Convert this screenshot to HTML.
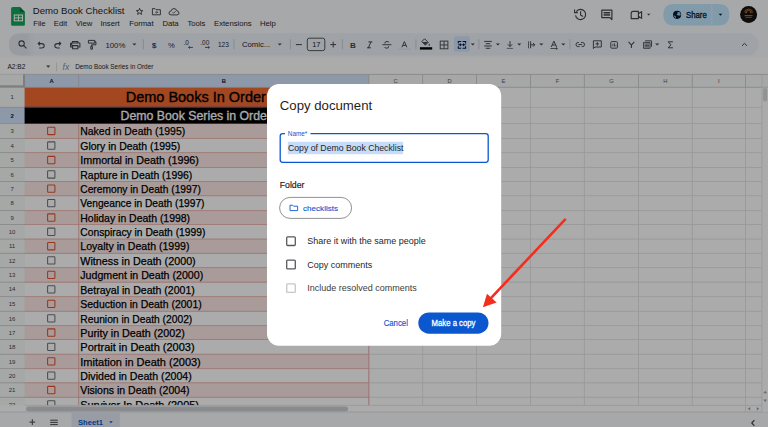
<!DOCTYPE html><html><head><meta charset="utf-8"><style>
html,body{margin:0;padding:0;width:768px;height:427px;overflow:hidden;background:#fff}
svg{position:absolute;left:0;top:0;display:block}
text{font-family:'Liberation Sans', sans-serif}
</style></head><body>
<svg width="768" height="427" viewBox="0 0 768 427">

<rect x="0" y="0" width="768" height="74" fill="#f9fbfd"/><rect x="0" y="58" width="768" height="16" fill="#ffffff"/>
<path d="M12.6 7.1 H19.9 L24.9 12.1 V24.3 Q24.9 25.8 23.4 25.8 H12.6 Q11.1 25.8 11.1 24.3 V8.6 Q11.1 7.1 12.6 7.1 Z" fill="#13a65a"/>
<path d="M19.9 7.1 L24.9 12.1 H19.9 Z" fill="#0c7a3e"/>
<rect x="14.3" y="15" width="8.2" height="5.8" fill="none" stroke="#fff" stroke-width="1.1"/>
<line x1="14.3" y1="17.9" x2="22.5" y2="17.9" stroke="#fff" stroke-width="1"/><line x1="18.4" y1="15" x2="18.4" y2="20.8" stroke="#fff" stroke-width="1"/>
<text x="32.8" y="14.3" font-size="9.6" fill="#1f1f1f">Demo Book Checklist</text>
<path d="M139.60 8.30 L140.45 10.53 L142.83 10.65 L140.98 12.15 L141.60 14.45 L139.60 13.15 L137.60 14.45 L138.22 12.15 L136.37 10.65 L138.75 10.53 Z" fill="none" stroke="#444746" stroke-width="0.95" stroke-linejoin="round"/>
<path d="M152.4 8.6 H155 L156 9.7 H160.4 V14.8 H152.4 Z" fill="none" stroke="#444746" stroke-width="0.95" stroke-linejoin="round"/><path d="M155.2 12.3 H157.6 M156.6 11.2 L157.7 12.3 L156.6 13.4" fill="none" stroke="#444746" stroke-width="0.8"/>
<path d="M171 14.9 Q169 14.9 169 13 Q169 11.3 170.8 11.2 Q171.5 8.6 174 8.6 Q176.6 8.7 177.1 11.1 Q179 11.3 179 13.1 Q178.9 14.9 177 14.9 Z" fill="none" stroke="#444746" stroke-width="0.95"/><path d="M172.4 12.1 L173.6 13.2 L175.7 11.1" fill="none" stroke="#444746" stroke-width="0.8"/>
<text x="33.2" y="25.7" font-size="7.7" fill="#1f1f1f">File</text>
<text x="53.8" y="25.7" font-size="7.7" fill="#1f1f1f">Edit</text>
<text x="75.8" y="25.7" font-size="7.7" fill="#1f1f1f">View</text>
<text x="100.4" y="25.7" font-size="7.7" fill="#1f1f1f">Insert</text>
<text x="129.2" y="25.7" font-size="7.7" fill="#1f1f1f">Format</text>
<text x="162.4" y="25.7" font-size="7.7" fill="#1f1f1f">Data</text>
<text x="187.4" y="25.7" font-size="7.7" fill="#1f1f1f">Tools</text>
<text x="214" y="25.7" font-size="7.7" fill="#1f1f1f">Extensions</text>
<text x="260" y="25.7" font-size="7.7" fill="#1f1f1f">Help</text>
<path d="M576.3 11.6 A5.1 5.1 0 1 1 575.5 15.4" fill="none" stroke="#444746" stroke-width="1.15"/><path d="M574.6 9.4 V12.6 H577.8" fill="none" stroke="#444746" stroke-width="1.1"/><path d="M580.6 11.3 V14.9 L583 16.4" fill="none" stroke="#444746" stroke-width="1.15"/>
<path d="M601.8 10.2 H611.9 V19.6 L609.9 17.6 H601.8 Z" fill="none" stroke="#444746" stroke-width="1.2" stroke-linejoin="round"/><rect x="603.6" y="12" width="6.5" height="1.5" fill="#444746"/><rect x="603.6" y="14.2" width="6.5" height="1.5" fill="#444746"/>
<path d="M633.2 11.4 H638.4 V18.6 H631.2 V13.4 Q631.2 11.4 633.2 11.4 Z M638.4 13.8 L641.6 11.6 V18.4 L638.4 16.2" fill="none" stroke="#444746" stroke-width="1.15" stroke-linejoin="round"/>
<path d="M647 13.7 H650.4 L648.7 15.6 Z" fill="#444746"/>
<path d="M674.2 4 H718.6 Q729.3 4 729.3 14.7 Q729.3 25.4 718.6 25.4 H674.2 Q663.3 25.4 663.3 14.7 Q663.3 4 674.2 4 Z" fill="#c2e7ff"/>
<line x1="711.8" y1="4" x2="711.8" y2="25.4" stroke="#e8f5ff" stroke-width="0.7"/>
<circle cx="677.1" cy="14.8" r="4.1" fill="#001d35"/><path d="M677.6 12 Q679.4 11.6 680.2 12.8 Q681 14.2 680.4 15.8 Q679.4 15.2 678.4 15.6 Q677 15.6 676.6 14.6 Q677.8 14 677.6 12 Z M673.8 15.6 Q675 15.4 675.8 16.6 Q676.2 17.6 675.6 18 Q674.2 17.2 673.8 15.6 Z" fill="#9fc6e4"/>
<text x="686" y="17.7" font-size="8.6" font-weight="400" textLength="20.8" lengthAdjust="spacingAndGlyphs" stroke="#001d35" stroke-width="0.3" fill="#001d35">Share</text>
<path d="M718.7 13.7 H722.3 L720.5 15.7 Z" fill="#001d35"/>
<circle cx="748.6" cy="14.6" r="8.5" fill="#17120f"/>
<path d="M745.2 13.2 V10.4 Q748.6 7.6 752 10.4 V13.2 M746.6 13.2 V11.2 Q748.6 9.6 750.6 11.2 V13.2" fill="none" stroke="#b8693a" stroke-width="1"/>
<rect x="744.6" y="15.2" width="8" height="1" fill="#8e8e8e"/><rect x="745.4" y="17" width="6.4" height="0.8" fill="#707070"/>
<rect x="9" y="33.2" width="749.8" height="22.4" rx="11.2" fill="#edf2fa"/>
<defs><linearGradient id="sg" x1="0" x2="1" y1="0" y2="0"><stop offset="0" stop-color="#e3e8ef"/><stop offset="0.7" stop-color="#e3e8ef"/><stop offset="1" stop-color="#edf2fa"/></linearGradient></defs><path d="M20.2 33.4 H34 V55.4 H20.2 Q9 55.4 9 44.4 Q9 33.4 20.2 33.4 Z" fill="url(#sg)"/>
<circle cx="21.6" cy="43.5" r="2.65" fill="none" stroke="#444746" stroke-width="1.05"/><line x1="23.5" y1="45.4" x2="26.4" y2="48.3" stroke="#444746" stroke-width="1.15"/>
<path d="M38.2 43.6 H41.6 Q44.2 43.6 44.2 45.8 Q44.2 47.9 41.6 47.9 H39.2 M39.9 41.9 L38.2 43.6 L39.9 45.3" fill="none" stroke="#444746" stroke-width="1.05"/>
<path d="M60.8 43.6 H57.4 Q54.8 43.6 54.8 45.8 Q54.8 47.9 57.4 47.9 H59.8 M59.1 41.9 L60.8 43.6 L59.1 45.3" fill="none" stroke="#444746" stroke-width="1.05"/>
<path d="M72.6 43 V41.4 H77.8 V43 M71.2 43 H79.3 Q79.9 43 79.9 43.6 V47 H77.8 M72.6 47 H70.6 V43.6 Q70.6 43 71.2 43 Z M72.6 45.6 H77.8 V48.7 H72.6 Z" fill="none" stroke="#444746" stroke-width="1.05"/>
<path d="M88.4 40.4 H94.8 V43.1 H88.4 Z M94.8 41.8 H95.9 V44.8 H91.6 V46.3 M90.8 46.3 H92.4 V49.2 H90.8 Z" fill="none" stroke="#444746" stroke-width="1"/>
<text x="105.4" y="47.7" font-size="7.8" fill="#303030">100%</text>
<path d="M132.35 43.4 H136.45000000000002 L134.4 45.6 Z" fill="#444746"/>
<line x1="143.4" y1="39.3" x2="143.4" y2="49.3" stroke="#c7c7c7" stroke-width="0.8"/>
<text x="151.9" y="47.6" font-size="7.8" fill="#303030" stroke="#303030" stroke-width="0.15">$</text>
<text x="168" y="47.6" font-size="7.6" fill="#303030">%</text>
<text x="183.6" y="45.1" font-size="6.4" fill="#303030">.0</text><path d="M192.9 47.4 H188.6 M189.9 46.3 L188.6 47.4 L189.9 48.5" fill="none" stroke="#444746" stroke-width="0.85"/>
<text x="200.3" y="45.1" font-size="6.4" fill="#303030">.00</text><path d="M205 47.4 H209.4 M208.1 46.3 L209.4 47.4 L208.1 48.5" fill="none" stroke="#444746" stroke-width="0.85"/>
<text x="217.9" y="46.7" font-size="6.6" fill="#303030">123</text>
<line x1="233.9" y1="39.3" x2="233.9" y2="49.3" stroke="#c7c7c7" stroke-width="0.8"/>
<text x="242" y="46.9" font-size="8" textLength="28.2" lengthAdjust="spacingAndGlyphs" fill="#1f1f1f">Comic...</text>
<path d="M277.75 43.4 H281.85 L279.8 45.6 Z" fill="#444746"/>
<line x1="290.4" y1="39.3" x2="290.4" y2="49.3" stroke="#c7c7c7" stroke-width="0.8"/>
<line x1="295.9" y1="44.6" x2="301.9" y2="44.6" stroke="#444746" stroke-width="1"/>
<rect x="307.3" y="38.2" width="17.5" height="12.4" rx="2" fill="none" stroke="#444746" stroke-width="0.9"/>
<text x="312.2" y="47.1" font-size="7.5" fill="#1f1f1f">17</text>
<path d="M330.3 44.6 H336.1 M333.2 41.7 V47.5" stroke="#444746" stroke-width="1"/>
<line x1="342.4" y1="39.3" x2="342.4" y2="49.3" stroke="#c7c7c7" stroke-width="0.8"/>
<text x="350.1" y="47.7" font-size="8.1" font-weight="700" fill="#444746">B</text>
<path d="M368.4 41.9 H372.3 M367 47.8 H370.9 M370.9 41.9 L368.4 47.8" fill="none" stroke="#444746" stroke-width="1"/>
<path d="M382.4 44.7 H391.4 M389.2 42.4 Q388.6 41.5 386.9 41.5 Q384.6 41.5 384.9 43.4 M388.6 46.2 Q388.8 48.2 386.9 48.2 Q385 48.2 384.5 47" fill="none" stroke="#444746" stroke-width="0.95"/>
<path d="M401.9 47.3 L404.4 41.6 L406.9 47.3 M402.8 45.4 H406" fill="none" stroke="#444746" stroke-width="0.95"/><rect x="398.5" y="48.5" width="12.2" height="1.3" fill="#dfe2e6"/>
<line x1="415.9" y1="39.3" x2="415.9" y2="49.3" stroke="#c7c7c7" stroke-width="0.8"/>
<path d="M424.6 38.8 L428.2 42.4 L425.4 45.2 L421.8 41.6 Z" fill="none" stroke="#444746" stroke-width="1"/><path d="M422.3 42.1 L428 42.1 L425.4 44.8 Z" fill="#444746"/><path d="M429.2 43.6 Q430.3 45 429.8 45.6 Q429.2 46.2 428.6 45.6 Q428.1 45 429.2 43.6 Z" fill="#444746"/>
<rect x="419.9" y="47.2" width="12.3" height="2.4" fill="#000"/>
<rect x="440.2" y="41.1" width="7.7" height="7.7" fill="none" stroke="#444746" stroke-width="0.9"/><path d="M444.05 41.1 V48.8 M440.2 44.95 H447.9" stroke="#444746" stroke-width="0.9"/>
<rect x="453.9" y="36.3" width="16" height="15.5" rx="2.2" fill="#d3e3fd"/>
<path d="M461.2 41.5 H458.3 V43.4 M458.3 46.2 V48.2 H461.2 M458.3 44.8 H461 M460 43.7 L461.1 44.8 L460 45.9 M462.6 41.5 H465.6 V43.4 M465.6 46.2 V48.2 H462.6 M465.6 44.8 H462.9 M463.9 43.7 L462.8 44.8 L463.9 45.9" fill="none" stroke="#041e49" stroke-width="1.05"/>
<path d="M470.75 43.4 H474.85 L472.8 45.6 Z" fill="#444746"/>
<line x1="478.9" y1="39.3" x2="478.9" y2="49.3" stroke="#c7c7c7" stroke-width="0.8"/>
<path d="M484.2 41.4 H491.8 M485.8 43.7 H490.2 M484.2 46 H491.8 M485.8 48.3 H490.2" stroke="#444746" stroke-width="0.95"/>
<path d="M495.84999999999997 43.4 H499.95 L497.9 45.6 Z" fill="#444746"/>
<path d="M510 41.2 V46.4 M507.9 44.4 L510 46.5 L512.1 44.4" fill="none" stroke="#444746" stroke-width="1"/><path d="M506.8 48.4 H512.9" stroke="#6d7175" stroke-width="0.9"/>
<path d="M517.25 43.4 H521.3499999999999 L519.3 45.6 Z" fill="#444746"/>
<path d="M528.5 41.3 V48.3" stroke="#6d7175" stroke-width="1"/><path d="M530.6 41.3 V48.3 M530.6 44.8 H534.8 M533 43 L534.8 44.8 L533 46.6" fill="none" stroke="#444746" stroke-width="0.95"/>
<path d="M539.25 43.4 H543.3499999999999 L541.3 45.6 Z" fill="#444746"/>
<path d="M551.2 47 L553.9 41.2 L556.6 47 M552.1 45 H555.7" fill="none" stroke="#444746" stroke-width="0.95"/><path d="M550.4 48.5 H557.4 M556 47.4 L557.4 48.5 L556 49.6" fill="none" stroke="#444746" stroke-width="0.8"/>
<path d="M561.25 43.4 H565.3499999999999 L563.3 45.6 Z" fill="#444746"/>
<line x1="570" y1="39.3" x2="570" y2="49.3" stroke="#c7c7c7" stroke-width="0.8"/>
<path d="M579 42.5 H578.2 Q576 42.5 576 44.55 Q576 46.6 578.2 46.6 H579.6 M581 42.5 H582.4 Q584.6 42.5 584.6 44.55 Q584.6 46.6 582.4 46.6 H581.6 M578.4 44.55 H582.2" fill="none" stroke="#444746" stroke-width="0.95"/>
<path d="M593.4 40.8 H601.3 V47 H595 L593.4 48.6 Z M597.35 42.2 V45.6 M595.65 43.9 H599.05" fill="none" stroke="#444746" stroke-width="0.95" stroke-linejoin="round"/>
<rect x="610.8" y="41.6" width="6.6" height="6.6" rx="0.8" fill="none" stroke="#444746" stroke-width="0.95"/><path d="M612.9 46.4 V43.8 M614.5 46.4 V43.2 M615.8 46.4 V45.2" stroke="#444746" stroke-width="0.8"/>
<path d="M628.5 41.9 L631.4 45 L634.3 41.9 M631.4 45 V47.9" fill="none" stroke="#444746" stroke-width="1.05"/>
<path d="M643.6 42.4 H650 V48.3 H643.6 Z M645.1 40.8 H651.5 V46.8" fill="none" stroke="#444746" stroke-width="0.9"/><path d="M644.6 44 H649 M644.6 45.4 H649 M644.6 46.8 H649" stroke="#444746" stroke-width="0.8"/>
<path d="M655.1500000000001 43.4 H659.25 L657.2 45.6 Z" fill="#444746"/>
<path d="M672.9 41.8 H668.2 L670.9 44.8 L668.2 47.8 H672.9" fill="none" stroke="#444746" stroke-width="1"/>
<path d="M742 45.8 L744.5 43.4 L747 45.8" fill="none" stroke="#444746" stroke-width="0.95"/>
<text x="7.4" y="69.2" font-size="6.6" fill="#1f1f1f">A2:B2</text>
<path d="M46.2 65.5 H50.2 L48.2 67.7 Z" fill="#444746"/>
<line x1="56.6" y1="62.6" x2="56.6" y2="71.2" stroke="#d0d3d6" stroke-width="0.8"/>
<text x="62.6" y="70" font-size="8.6" font-style="italic" font-family="Liberation Serif" fill="#8a8f94">fx</text>
<text x="75.2" y="69" font-size="6.4" fill="#1f1f1f">Demo Book Series in Order</text>
<rect x="0" y="74.4" width="768" height="331.1" fill="#ffffff"/>
<rect x="0" y="74.4" width="768" height="12.899999999999991" fill="#f8f9fa"/>
<rect x="0" y="87.3" width="25" height="318.2" fill="#f8f9fa"/>
<rect x="24.6" y="74.4" width="344.2" height="12.899999999999991" fill="#d3e3fd"/>
<rect x="0" y="107.4" width="25" height="16.099999999999994" fill="#d3e3fd"/>
<rect x="24.6" y="87.3" width="344.2" height="20.10000000000001" fill="rgb(244,106,50)"/>
<rect x="24.6" y="107.4" width="344.2" height="16.099999999999994" fill="#000"/>
<rect x="24.6" y="123.5" width="344.2" height="15.0" fill="#fce8e6"/>
<rect x="24.6" y="152.6" width="344.2" height="14.900000000000006" fill="#fce8e6"/>
<rect x="24.6" y="181.5" width="344.2" height="14.199999999999989" fill="#fce8e6"/>
<rect x="24.6" y="210.6" width="344.2" height="13.900000000000006" fill="#fce8e6"/>
<rect x="24.6" y="239.1" width="344.2" height="14.300000000000011" fill="#fce8e6"/>
<rect x="24.6" y="267.6" width="344.2" height="14.599999999999966" fill="#fce8e6"/>
<rect x="24.6" y="296.6" width="344.2" height="14.699999999999989" fill="#fce8e6"/>
<rect x="24.6" y="325.6" width="344.2" height="13.899999999999977" fill="#fce8e6"/>
<rect x="24.6" y="354.3" width="344.2" height="14.300000000000011" fill="#fce8e6"/>
<rect x="24.6" y="382.8" width="344.2" height="14.5" fill="#fce8e6"/>
<line x1="25" y1="123.5" x2="761.5" y2="123.5" stroke="#e1e1e1" stroke-width="0.8"/>
<line x1="25" y1="138.5" x2="761.5" y2="138.5" stroke="#e1e1e1" stroke-width="0.8"/>
<line x1="25" y1="152.6" x2="761.5" y2="152.6" stroke="#e1e1e1" stroke-width="0.8"/>
<line x1="25" y1="167.5" x2="761.5" y2="167.5" stroke="#e1e1e1" stroke-width="0.8"/>
<line x1="25" y1="181.5" x2="761.5" y2="181.5" stroke="#e1e1e1" stroke-width="0.8"/>
<line x1="25" y1="195.7" x2="761.5" y2="195.7" stroke="#e1e1e1" stroke-width="0.8"/>
<line x1="25" y1="210.6" x2="761.5" y2="210.6" stroke="#e1e1e1" stroke-width="0.8"/>
<line x1="25" y1="224.5" x2="761.5" y2="224.5" stroke="#e1e1e1" stroke-width="0.8"/>
<line x1="25" y1="239.1" x2="761.5" y2="239.1" stroke="#e1e1e1" stroke-width="0.8"/>
<line x1="25" y1="253.4" x2="761.5" y2="253.4" stroke="#e1e1e1" stroke-width="0.8"/>
<line x1="25" y1="267.6" x2="761.5" y2="267.6" stroke="#e1e1e1" stroke-width="0.8"/>
<line x1="25" y1="282.2" x2="761.5" y2="282.2" stroke="#e1e1e1" stroke-width="0.8"/>
<line x1="25" y1="296.6" x2="761.5" y2="296.6" stroke="#e1e1e1" stroke-width="0.8"/>
<line x1="25" y1="311.3" x2="761.5" y2="311.3" stroke="#e1e1e1" stroke-width="0.8"/>
<line x1="25" y1="325.6" x2="761.5" y2="325.6" stroke="#e1e1e1" stroke-width="0.8"/>
<line x1="25" y1="339.5" x2="761.5" y2="339.5" stroke="#e1e1e1" stroke-width="0.8"/>
<line x1="25" y1="354.3" x2="761.5" y2="354.3" stroke="#e1e1e1" stroke-width="0.8"/>
<line x1="25" y1="368.6" x2="761.5" y2="368.6" stroke="#e1e1e1" stroke-width="0.8"/>
<line x1="25" y1="382.8" x2="761.5" y2="382.8" stroke="#e1e1e1" stroke-width="0.8"/>
<line x1="25" y1="397.3" x2="761.5" y2="397.3" stroke="#e1e1e1" stroke-width="0.8"/>
<line x1="368.8" y1="107.4" x2="761.5" y2="107.4" stroke="#e1e1e1" stroke-width="0.8"/>
<line x1="78.7" y1="123.5" x2="78.7" y2="405.5" stroke="#e1e1e1" stroke-width="0.8"/>
<line x1="368.8" y1="87.3" x2="368.8" y2="405.5" stroke="#e1e1e1" stroke-width="0.8"/>
<line x1="422.6" y1="87.3" x2="422.6" y2="405.5" stroke="#e1e1e1" stroke-width="0.8"/>
<line x1="476.5" y1="87.3" x2="476.5" y2="405.5" stroke="#e1e1e1" stroke-width="0.8"/>
<line x1="530.5" y1="87.3" x2="530.5" y2="405.5" stroke="#e1e1e1" stroke-width="0.8"/>
<line x1="584.4" y1="87.3" x2="584.4" y2="405.5" stroke="#e1e1e1" stroke-width="0.8"/>
<line x1="638.5" y1="87.3" x2="638.5" y2="405.5" stroke="#e1e1e1" stroke-width="0.8"/>
<line x1="692.3" y1="87.3" x2="692.3" y2="405.5" stroke="#e1e1e1" stroke-width="0.8"/>
<line x1="745.5" y1="87.3" x2="745.5" y2="405.5" stroke="#e1e1e1" stroke-width="0.8"/>
<line x1="24.6" y1="123.5" x2="368.8" y2="123.5" stroke="#f0b0a8" stroke-width="0.8"/>
<line x1="24.6" y1="138.5" x2="368.8" y2="138.5" stroke="#f0b0a8" stroke-width="0.8"/>
<line x1="24.6" y1="152.6" x2="368.8" y2="152.6" stroke="#f0b0a8" stroke-width="0.8"/>
<line x1="24.6" y1="167.5" x2="368.8" y2="167.5" stroke="#f0b0a8" stroke-width="0.8"/>
<line x1="24.6" y1="181.5" x2="368.8" y2="181.5" stroke="#f0b0a8" stroke-width="0.8"/>
<line x1="24.6" y1="195.7" x2="368.8" y2="195.7" stroke="#f0b0a8" stroke-width="0.8"/>
<line x1="24.6" y1="210.6" x2="368.8" y2="210.6" stroke="#f0b0a8" stroke-width="0.8"/>
<line x1="24.6" y1="224.5" x2="368.8" y2="224.5" stroke="#f0b0a8" stroke-width="0.8"/>
<line x1="24.6" y1="239.1" x2="368.8" y2="239.1" stroke="#f0b0a8" stroke-width="0.8"/>
<line x1="24.6" y1="253.4" x2="368.8" y2="253.4" stroke="#f0b0a8" stroke-width="0.8"/>
<line x1="24.6" y1="267.6" x2="368.8" y2="267.6" stroke="#f0b0a8" stroke-width="0.8"/>
<line x1="24.6" y1="282.2" x2="368.8" y2="282.2" stroke="#f0b0a8" stroke-width="0.8"/>
<line x1="24.6" y1="296.6" x2="368.8" y2="296.6" stroke="#f0b0a8" stroke-width="0.8"/>
<line x1="24.6" y1="311.3" x2="368.8" y2="311.3" stroke="#f0b0a8" stroke-width="0.8"/>
<line x1="24.6" y1="325.6" x2="368.8" y2="325.6" stroke="#f0b0a8" stroke-width="0.8"/>
<line x1="24.6" y1="339.5" x2="368.8" y2="339.5" stroke="#f0b0a8" stroke-width="0.8"/>
<line x1="24.6" y1="354.3" x2="368.8" y2="354.3" stroke="#f0b0a8" stroke-width="0.8"/>
<line x1="24.6" y1="368.6" x2="368.8" y2="368.6" stroke="#f0b0a8" stroke-width="0.8"/>
<line x1="24.6" y1="382.8" x2="368.8" y2="382.8" stroke="#f0b0a8" stroke-width="0.8"/>
<line x1="24.6" y1="397.3" x2="368.8" y2="397.3" stroke="#f0b0a8" stroke-width="0.8"/>
<line x1="78.7" y1="123.5" x2="78.7" y2="405.5" stroke="#f2a0a0" stroke-width="0.7"/>
<line x1="368.8" y1="123.5" x2="368.8" y2="405.5" stroke="#f2a0a0" stroke-width="0.8"/>
<line x1="0" y1="74.4" x2="768" y2="74.4" stroke="#c7c7c7" stroke-width="0.8"/>
<line x1="24.6" y1="74.4" x2="24.6" y2="87.3" stroke="#c7c7c7" stroke-width="0.8"/>
<line x1="78.7" y1="74.4" x2="78.7" y2="87.3" stroke="#c7c7c7" stroke-width="0.8"/>
<line x1="368.8" y1="74.4" x2="368.8" y2="87.3" stroke="#c7c7c7" stroke-width="0.8"/>
<line x1="422.6" y1="74.4" x2="422.6" y2="87.3" stroke="#c7c7c7" stroke-width="0.8"/>
<line x1="476.5" y1="74.4" x2="476.5" y2="87.3" stroke="#c7c7c7" stroke-width="0.8"/>
<line x1="530.5" y1="74.4" x2="530.5" y2="87.3" stroke="#c7c7c7" stroke-width="0.8"/>
<line x1="584.4" y1="74.4" x2="584.4" y2="87.3" stroke="#c7c7c7" stroke-width="0.8"/>
<line x1="638.5" y1="74.4" x2="638.5" y2="87.3" stroke="#c7c7c7" stroke-width="0.8"/>
<line x1="692.3" y1="74.4" x2="692.3" y2="87.3" stroke="#c7c7c7" stroke-width="0.8"/>
<line x1="745.5" y1="74.4" x2="745.5" y2="87.3" stroke="#c7c7c7" stroke-width="0.8"/>
<line x1="0" y1="107.4" x2="25" y2="107.4" stroke="#c7c7c7" stroke-width="0.8"/>
<line x1="0" y1="123.5" x2="25" y2="123.5" stroke="#c7c7c7" stroke-width="0.8"/>
<line x1="0" y1="138.5" x2="25" y2="138.5" stroke="#c7c7c7" stroke-width="0.8"/>
<line x1="0" y1="152.6" x2="25" y2="152.6" stroke="#c7c7c7" stroke-width="0.8"/>
<line x1="0" y1="167.5" x2="25" y2="167.5" stroke="#c7c7c7" stroke-width="0.8"/>
<line x1="0" y1="181.5" x2="25" y2="181.5" stroke="#c7c7c7" stroke-width="0.8"/>
<line x1="0" y1="195.7" x2="25" y2="195.7" stroke="#c7c7c7" stroke-width="0.8"/>
<line x1="0" y1="210.6" x2="25" y2="210.6" stroke="#c7c7c7" stroke-width="0.8"/>
<line x1="0" y1="224.5" x2="25" y2="224.5" stroke="#c7c7c7" stroke-width="0.8"/>
<line x1="0" y1="239.1" x2="25" y2="239.1" stroke="#c7c7c7" stroke-width="0.8"/>
<line x1="0" y1="253.4" x2="25" y2="253.4" stroke="#c7c7c7" stroke-width="0.8"/>
<line x1="0" y1="267.6" x2="25" y2="267.6" stroke="#c7c7c7" stroke-width="0.8"/>
<line x1="0" y1="282.2" x2="25" y2="282.2" stroke="#c7c7c7" stroke-width="0.8"/>
<line x1="0" y1="296.6" x2="25" y2="296.6" stroke="#c7c7c7" stroke-width="0.8"/>
<line x1="0" y1="311.3" x2="25" y2="311.3" stroke="#c7c7c7" stroke-width="0.8"/>
<line x1="0" y1="325.6" x2="25" y2="325.6" stroke="#c7c7c7" stroke-width="0.8"/>
<line x1="0" y1="339.5" x2="25" y2="339.5" stroke="#c7c7c7" stroke-width="0.8"/>
<line x1="0" y1="354.3" x2="25" y2="354.3" stroke="#c7c7c7" stroke-width="0.8"/>
<line x1="0" y1="368.6" x2="25" y2="368.6" stroke="#c7c7c7" stroke-width="0.8"/>
<line x1="0" y1="382.8" x2="25" y2="382.8" stroke="#c7c7c7" stroke-width="0.8"/>
<line x1="0" y1="397.3" x2="25" y2="397.3" stroke="#c7c7c7" stroke-width="0.8"/>
<line x1="0" y1="87.3" x2="768" y2="87.3" stroke="#c7c7c7" stroke-width="0.8"/>
<rect x="0" y="74.4" width="23" height="10.899999999999991" fill="#f8f9fa"/>
<line x1="24" y1="74.4" x2="24" y2="87.3" stroke="#bdbdbd" stroke-width="2"/>
<line x1="0" y1="86.3" x2="25" y2="86.3" stroke="#bdbdbd" stroke-width="2"/>
<text x="51.7" y="83" font-size="5.8" font-weight="700" text-anchor="middle" fill="#041e49">A</text>
<text x="223.8" y="83" font-size="5.8" font-weight="700" text-anchor="middle" fill="#041e49">B</text>
<text x="395.7" y="83" font-size="5.8" font-weight="400" text-anchor="middle" fill="#5f6368">C</text>
<text x="449.6" y="83" font-size="5.8" font-weight="400" text-anchor="middle" fill="#5f6368">D</text>
<text x="503.5" y="83" font-size="5.8" font-weight="400" text-anchor="middle" fill="#5f6368">E</text>
<text x="557.5" y="83" font-size="5.8" font-weight="400" text-anchor="middle" fill="#5f6368">F</text>
<text x="611.5" y="83" font-size="5.8" font-weight="400" text-anchor="middle" fill="#5f6368">G</text>
<text x="665.4" y="83" font-size="5.8" font-weight="400" text-anchor="middle" fill="#5f6368">H</text>
<text x="718.9" y="83" font-size="5.8" font-weight="400" text-anchor="middle" fill="#5f6368">I</text>
<text x="12.1" y="99.3" font-size="6" font-weight="400" text-anchor="middle" fill="#444746">1</text>
<text x="12.1" y="117.5" font-size="6" font-weight="700" text-anchor="middle" fill="#041e49">2</text>
<text x="12.1" y="133.0" font-size="6" font-weight="400" text-anchor="middle" fill="#444746">3</text>
<text x="12.1" y="147.6" font-size="6" font-weight="400" text-anchor="middle" fill="#444746">4</text>
<text x="12.1" y="162.1" font-size="6" font-weight="400" text-anchor="middle" fill="#444746">5</text>
<text x="12.1" y="176.5" font-size="6" font-weight="400" text-anchor="middle" fill="#444746">6</text>
<text x="12.1" y="190.6" font-size="6" font-weight="400" text-anchor="middle" fill="#444746">7</text>
<text x="12.1" y="205.1" font-size="6" font-weight="400" text-anchor="middle" fill="#444746">8</text>
<text x="12.1" y="219.6" font-size="6" font-weight="400" text-anchor="middle" fill="#444746">9</text>
<text x="12.1" y="233.8" font-size="6" font-weight="400" text-anchor="middle" fill="#444746">10</text>
<text x="12.1" y="248.2" font-size="6" font-weight="400" text-anchor="middle" fill="#444746">11</text>
<text x="12.1" y="262.5" font-size="6" font-weight="400" text-anchor="middle" fill="#444746">12</text>
<text x="12.1" y="276.9" font-size="6" font-weight="400" text-anchor="middle" fill="#444746">13</text>
<text x="12.1" y="291.4" font-size="6" font-weight="400" text-anchor="middle" fill="#444746">14</text>
<text x="12.1" y="306.0" font-size="6" font-weight="400" text-anchor="middle" fill="#444746">15</text>
<text x="12.1" y="320.5" font-size="6" font-weight="400" text-anchor="middle" fill="#444746">16</text>
<text x="12.1" y="334.6" font-size="6" font-weight="400" text-anchor="middle" fill="#444746">17</text>
<text x="12.1" y="348.9" font-size="6" font-weight="400" text-anchor="middle" fill="#444746">18</text>
<text x="12.1" y="363.5" font-size="6" font-weight="400" text-anchor="middle" fill="#444746">19</text>
<text x="12.1" y="377.7" font-size="6" font-weight="400" text-anchor="middle" fill="#444746">20</text>
<text x="12.1" y="392.1" font-size="6" font-weight="400" text-anchor="middle" fill="#444746">21</text>
<text x="12.1" y="406.5" font-size="6" font-weight="400" text-anchor="middle" fill="#444746">22</text>
<line x1="24.6" y1="107.4" x2="368.8" y2="107.4" stroke="#0b57d0" stroke-width="1.1"/><line x1="24.6" y1="123.5" x2="368.8" y2="123.5" stroke="#0b57d0" stroke-width="1.1"/>
<text x="195.8" y="102.4" font-size="14.5" text-anchor="middle" fill="#000" stroke="#000" stroke-width="0.35">Demo Books In Order</text>
<text x="195.8" y="119.9" font-size="12.3" text-anchor="middle" fill="#fff" stroke="#fff" stroke-width="0.3">Demo Book Series in Order</text>
<rect x="47.6" y="127.30" width="7.3" height="7.3" rx="0.7" fill="none" stroke="#e0532d" stroke-width="1.05"/>
<text x="80.3" y="135.20" font-size="10.5" textLength="104.9" lengthAdjust="spacingAndGlyphs" fill="#000" stroke="#000" stroke-width="0.25">Naked in Death (1995)</text>
<rect x="47.6" y="141.85" width="7.3" height="7.3" rx="0.7" fill="none" stroke="#6f7378" stroke-width="1.05"/>
<text x="80.3" y="149.75" font-size="10.5" textLength="99.9" lengthAdjust="spacingAndGlyphs" fill="#000" stroke="#000" stroke-width="0.25">Glory in Death (1995)</text>
<rect x="47.6" y="156.35" width="7.3" height="7.3" rx="0.7" fill="none" stroke="#e0532d" stroke-width="1.05"/>
<text x="80.3" y="164.25" font-size="10.5" textLength="118.6" lengthAdjust="spacingAndGlyphs" fill="#000" stroke="#000" stroke-width="0.25">Immortal in Death (1996)</text>
<rect x="47.6" y="170.80" width="7.3" height="7.3" rx="0.7" fill="none" stroke="#6f7378" stroke-width="1.05"/>
<text x="80.3" y="178.70" font-size="10.5" textLength="112.0" lengthAdjust="spacingAndGlyphs" fill="#000" stroke="#000" stroke-width="0.25">Rapture in Death (1996)</text>
<rect x="47.6" y="184.90" width="7.3" height="7.3" rx="0.7" fill="none" stroke="#e0532d" stroke-width="1.05"/>
<text x="80.3" y="192.80" font-size="10.5" textLength="120.5" lengthAdjust="spacingAndGlyphs" fill="#000" stroke="#000" stroke-width="0.25">Ceremony in Death (1997)</text>
<rect x="47.6" y="199.45" width="7.3" height="7.3" rx="0.7" fill="none" stroke="#6f7378" stroke-width="1.05"/>
<text x="80.3" y="207.35" font-size="10.5" textLength="124.2" lengthAdjust="spacingAndGlyphs" fill="#000" stroke="#000" stroke-width="0.25">Vengeance in Death (1997)</text>
<rect x="47.6" y="213.85" width="7.3" height="7.3" rx="0.7" fill="none" stroke="#e0532d" stroke-width="1.05"/>
<text x="80.3" y="221.75" font-size="10.5" textLength="109.8" lengthAdjust="spacingAndGlyphs" fill="#000" stroke="#000" stroke-width="0.25">Holiday in Death (1998)</text>
<rect x="47.6" y="228.10" width="7.3" height="7.3" rx="0.7" fill="none" stroke="#6f7378" stroke-width="1.05"/>
<text x="80.3" y="236.00" font-size="10.5" textLength="125.1" lengthAdjust="spacingAndGlyphs" fill="#000" stroke="#000" stroke-width="0.25">Conspiracy in Death (1999)</text>
<rect x="47.6" y="242.55" width="7.3" height="7.3" rx="0.7" fill="none" stroke="#e0532d" stroke-width="1.05"/>
<text x="80.3" y="250.45" font-size="10.5" textLength="109.2" lengthAdjust="spacingAndGlyphs" fill="#000" stroke="#000" stroke-width="0.25">Loyalty in Death (1999)</text>
<rect x="47.6" y="256.80" width="7.3" height="7.3" rx="0.7" fill="none" stroke="#6f7378" stroke-width="1.05"/>
<text x="80.3" y="264.70" font-size="10.5" textLength="115.4" lengthAdjust="spacingAndGlyphs" fill="#000" stroke="#000" stroke-width="0.25">Witness in Death (2000)</text>
<rect x="47.6" y="271.20" width="7.3" height="7.3" rx="0.7" fill="none" stroke="#e0532d" stroke-width="1.05"/>
<text x="80.3" y="279.10" font-size="10.5" textLength="122.9" lengthAdjust="spacingAndGlyphs" fill="#000" stroke="#000" stroke-width="0.25">Judgment in Death (2000)</text>
<rect x="47.6" y="285.70" width="7.3" height="7.3" rx="0.7" fill="none" stroke="#6f7378" stroke-width="1.05"/>
<text x="80.3" y="293.60" font-size="10.5" textLength="114.5" lengthAdjust="spacingAndGlyphs" fill="#000" stroke="#000" stroke-width="0.25">Betrayal in Death (2001)</text>
<rect x="47.6" y="300.25" width="7.3" height="7.3" rx="0.7" fill="none" stroke="#e0532d" stroke-width="1.05"/>
<text x="80.3" y="308.15" font-size="10.5" textLength="121.4" lengthAdjust="spacingAndGlyphs" fill="#000" stroke="#000" stroke-width="0.25">Seduction in Death (2001)</text>
<rect x="47.6" y="314.75" width="7.3" height="7.3" rx="0.7" fill="none" stroke="#6f7378" stroke-width="1.05"/>
<text x="80.3" y="322.65" font-size="10.5" textLength="112.0" lengthAdjust="spacingAndGlyphs" fill="#000" stroke="#000" stroke-width="0.25">Reunion in Death (2002)</text>
<rect x="47.6" y="328.85" width="7.3" height="7.3" rx="0.7" fill="none" stroke="#e0532d" stroke-width="1.05"/>
<text x="80.3" y="336.75" font-size="10.5" textLength="104.5" lengthAdjust="spacingAndGlyphs" fill="#000" stroke="#000" stroke-width="0.25">Purity in Death (2002)</text>
<rect x="47.6" y="343.20" width="7.3" height="7.3" rx="0.7" fill="none" stroke="#6f7378" stroke-width="1.05"/>
<text x="80.3" y="351.10" font-size="10.5" textLength="114.3" lengthAdjust="spacingAndGlyphs" fill="#000" stroke="#000" stroke-width="0.25">Portrait in Death (2003)</text>
<rect x="47.6" y="357.75" width="7.3" height="7.3" rx="0.7" fill="none" stroke="#e0532d" stroke-width="1.05"/>
<text x="80.3" y="365.65" font-size="10.5" textLength="120.5" lengthAdjust="spacingAndGlyphs" fill="#000" stroke="#000" stroke-width="0.25">Imitation in Death (2003)</text>
<rect x="47.6" y="372.00" width="7.3" height="7.3" rx="0.7" fill="none" stroke="#6f7378" stroke-width="1.05"/>
<text x="80.3" y="379.90" font-size="10.5" textLength="111.5" lengthAdjust="spacingAndGlyphs" fill="#000" stroke="#000" stroke-width="0.25">Divided in Death (2004)</text>
<rect x="47.6" y="386.35" width="7.3" height="7.3" rx="0.7" fill="none" stroke="#e0532d" stroke-width="1.05"/>
<text x="80.3" y="394.25" font-size="10.5" textLength="109.2" lengthAdjust="spacingAndGlyphs" fill="#000" stroke="#000" stroke-width="0.25">Visions in Death (2004)</text>
<rect x="47.6" y="400.80" width="7.3" height="7.3" rx="0.7" fill="none" stroke="#6f7378" stroke-width="1.05"/>
<text x="80.3" y="408.70" font-size="10.5" textLength="118.6" lengthAdjust="spacingAndGlyphs" fill="#000" stroke="#000" stroke-width="0.25">Survivor In Death (2005)</text>
<rect x="0" y="405.5" width="768" height="21.5" fill="#f9fbfd"/>
<rect x="0" y="405.5" width="761.5" height="6.5" fill="#fff"/>
<rect x="26" y="406.5" width="322" height="5" rx="2.5" fill="#cdd0d4"/>
<line x1="0" y1="412" x2="768" y2="412" stroke="#dadce0" stroke-width="0.8"/>
<path d="M750.2 407 L747.8 408.7 L750.2 410.4 Z M756.8 407 L759.2 408.7 L756.8 410.4 Z" fill="#9aa0a6"/>
<line x1="25" y1="405.4" x2="761.5" y2="405.4" stroke="#e1e1e1" stroke-width="0.8"/><line x1="745.5" y1="405.4" x2="745.5" y2="412" stroke="#e1e1e1" stroke-width="0.8"/>
<line x1="761.5" y1="388.7" x2="768" y2="388.7" stroke="#e1e1e1" stroke-width="0.7"/><line x1="761.5" y1="396.7" x2="768" y2="396.7" stroke="#e1e1e1" stroke-width="0.7"/><line x1="761.5" y1="405.4" x2="768" y2="405.4" stroke="#e1e1e1" stroke-width="0.7"/>
<rect x="761.9" y="87.7" width="6.1" height="324.3" fill="#fff"/>
<line x1="762" y1="74.4" x2="762" y2="412" stroke="#dcdcdc" stroke-width="0.7"/>
<rect x="763" y="88" width="4.2" height="13.6" rx="2.1" fill="#dadce0"/>
<path d="M763.4 393.2 L765.2 390.8 L767 393.2 Z M763.4 399.6 L765.2 402 L767 399.6 Z" fill="#9aa0a6"/>
<path d="M29.4 422.1 H35.2 M32.3 419.2 V425" stroke="#444746" stroke-width="1"/>
<path d="M50.2 420.2 H57.8 M50.2 422.4 H57.8 M50.2 424.6 H57.8" stroke="#444746" stroke-width="0.95"/>
<rect x="71.5" y="412.7" width="48.3" height="14.3" fill="#e1e9f7"/>
<text x="78" y="425.2" font-size="7.6" font-weight="700" fill="#0b57d0">Sheet1</text>
<path d="M109.2 421.2 H112.8 L111 423.2 Z" fill="#0b57d0"/>
<path d="M754.4 420.2 L751.8 423 L754.4 425.8" fill="none" stroke="#444746" stroke-width="1.2"/>
<rect x="0" y="0" width="768" height="427" fill="#000" fill-opacity="0.33"/>
<rect x="267" y="84" width="234.2" height="261.7" rx="12" fill="#fff"/>
<text x="279.8" y="110" font-size="13.2" fill="#1f1f1f">Copy document</text>
<rect x="280.2" y="133.6" width="208" height="28.7" rx="2.5" fill="none" stroke="#0b57d0" stroke-width="1.3"/>
<rect x="285" y="130" width="25.5" height="8" fill="#fff"/>
<text x="287.8" y="136.4" font-size="6.4" fill="#0b57d0">Name*</text>
<rect x="287.8" y="141.8" width="115.3" height="12.4" fill="#c6dcf8"/>
<text x="288" y="150.8" font-size="8.7" fill="#1f1f1f">Copy of Demo Book Checklist</text>
<text x="279.8" y="187.6" font-size="8.7" stroke="#1f1f1f" stroke-width="0.2" fill="#1f1f1f">Folder</text>
<rect x="279.6" y="197.4" width="72" height="21" rx="10.5" fill="none" stroke="#747775" stroke-width="0.8"/>
<path d="M290 205.2 H292.6 L293.6 206.2 H297.6 V210.6 H290 Z" fill="none" stroke="#0b57d0" stroke-width="0.9" stroke-linejoin="round"/>
<text x="303" y="210.5" font-size="7.7" textLength="35.1" lengthAdjust="spacingAndGlyphs" stroke="#0b57d0" stroke-width="0.12" fill="#0b57d0">checklists</text>
<rect x="286.7" y="236.89999999999998" width="8.6" height="8.6" rx="0.9" fill="none" stroke="#55595d" stroke-width="1.3"/>
<text x="307.3" y="244.2" font-size="9" fill="#1f1f1f">Share it with the same people</text>
<rect x="286.7" y="260.2" width="8.6" height="8.6" rx="0.9" fill="none" stroke="#55595d" stroke-width="1.3"/>
<text x="307.3" y="267.5" font-size="9" fill="#1f1f1f">Copy comments</text>
<rect x="286.7" y="283.8" width="8.6" height="8.6" rx="0.9" fill="none" stroke="#c4c7c5" stroke-width="1.3"/>
<text x="307.3" y="291.1" font-size="9" fill="#3c3c3c">Include resolved comments</text>
<text x="383.7" y="325.9" font-size="8.6" textLength="24.2" lengthAdjust="spacingAndGlyphs" stroke="#0b57d0" stroke-width="0.15" fill="#0b57d0">Cancel</text>
<rect x="418.3" y="312.4" width="70.2" height="21.3" rx="10.65" fill="#0b57d0"/>
<text x="431.6" y="325.9" font-size="8.6" textLength="43.8" lengthAdjust="spacingAndGlyphs" stroke="#fff" stroke-width="0.3" fill="#fff">Make a copy</text>
<line x1="565" y1="219.6" x2="489.5" y2="299.6" stroke="#f52d1d" stroke-width="2.6" stroke-linecap="round"/>
<path d="M482.9 307.2 L487 293.8 L496.6 302.4 Z" fill="#f52d1d"/>
</svg></body></html>
